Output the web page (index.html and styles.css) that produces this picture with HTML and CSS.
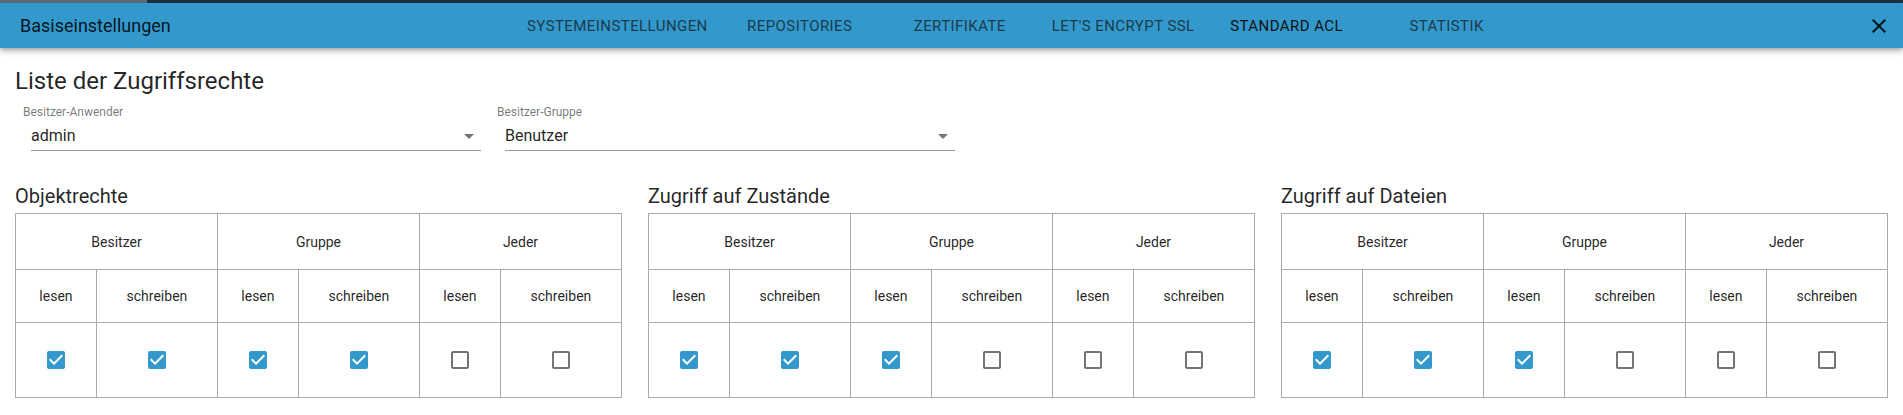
FILE: index.html
```html
<!DOCTYPE html>
<html lang="de">
<head>
<meta charset="utf-8">
<title>Basiseinstellungen</title>
<link rel="stylesheet" href="styles.css">
</head>
<body>
<div class="topstrip"><span class="strip-a"></span><span class="strip-b"></span></div>
<header class="appbar">
  <div class="appbar-title">Basiseinstellungen</div>
  <nav class="tabs">
    <div class="tab">Systemeinstellungen</div>
    <div class="tab">Repositories</div>
    <div class="tab">Zertifikate</div>
    <div class="tab">Let's Encrypt SSL</div>
    <div class="tab active">Standard ACL</div>
    <div class="tab">Statistik</div>
  </nav>
  <button class="close" aria-label="Schließen">
    <svg viewBox="0 0 24 24" width="24" height="24"><path d="M19 6.41L17.59 5 12 10.59 6.41 5 5 6.41 10.59 12 5 17.59 6.41 19 12 13.41 17.59 19 19 17.59 13.41 12z"/></svg>
  </button>
</header>

<main class="content">
  <h1 class="page-title">Liste der Zugriffsrechte</h1>

  <div class="selects">
    <div class="field">
      <div class="field-label">Besitzer-Anwender</div>
      <div class="select-box">
        <span class="select-value">admin</span>
        <svg class="arrow" viewBox="0 0 24 24" width="24" height="24"><path d="M7 10l5 5 5-5z"/></svg>
      </div>
    </div>
    <div class="field">
      <div class="field-label">Besitzer-Gruppe</div>
      <div class="select-box">
        <span class="select-value">Benutzer</span>
        <svg class="arrow" viewBox="0 0 24 24" width="24" height="24"><path d="M7 10l5 5 5-5z"/></svg>
      </div>
    </div>
  </div>

  <div class="sections">
    <section class="section">
      <h2 class="section-title">Objektrechte</h2>
      <table class="acl">
        <colgroup><col class="c-r"><col class="c-w"><col class="c-r"><col class="c-w"><col class="c-r"><col class="c-w"></colgroup>
        <tr class="row-group"><th colspan="2">Besitzer</th><th colspan="2">Gruppe</th><th colspan="2">Jeder</th></tr>
        <tr class="row-perm"><td>lesen</td><td>schreiben</td><td>lesen</td><td>schreiben</td><td>lesen</td><td>schreiben</td></tr>
        <tr class="row-check">
          <td><svg class="cb on" viewBox="3 3 18 18"><path d="M19 3H5c-1.11 0-2 .9-2 2v14c0 1.1.89 2 2 2h14c1.11 0 2-.9 2-2V5c0-1.1-.89-2-2-2zm-9 14l-5-5 1.41-1.41L10 14.17l7.59-7.59L19 8l-9 9z"/></svg></td>
          <td><svg class="cb on" viewBox="3 3 18 18"><path d="M19 3H5c-1.11 0-2 .9-2 2v14c0 1.1.89 2 2 2h14c1.11 0 2-.9 2-2V5c0-1.1-.89-2-2-2zm-9 14l-5-5 1.41-1.41L10 14.17l7.59-7.59L19 8l-9 9z"/></svg></td>
          <td><svg class="cb on" viewBox="3 3 18 18"><path d="M19 3H5c-1.11 0-2 .9-2 2v14c0 1.1.89 2 2 2h14c1.11 0 2-.9 2-2V5c0-1.1-.89-2-2-2zm-9 14l-5-5 1.41-1.41L10 14.17l7.59-7.59L19 8l-9 9z"/></svg></td>
          <td><svg class="cb on" viewBox="3 3 18 18"><path d="M19 3H5c-1.11 0-2 .9-2 2v14c0 1.1.89 2 2 2h14c1.11 0 2-.9 2-2V5c0-1.1-.89-2-2-2zm-9 14l-5-5 1.41-1.41L10 14.17l7.59-7.59L19 8l-9 9z"/></svg></td>
          <td><svg class="cb off" viewBox="3 3 18 18"><path d="M19 5v14H5V5h14m0-2H5c-1.1 0-2 .9-2 2v14c0 1.1.9 2 2 2h14c1.1 0 2-.9 2-2V5c0-1.1-.9-2-2-2z"/></svg></td>
          <td><svg class="cb off" viewBox="3 3 18 18"><path d="M19 5v14H5V5h14m0-2H5c-1.1 0-2 .9-2 2v14c0 1.1.9 2 2 2h14c1.1 0 2-.9 2-2V5c0-1.1-.9-2-2-2z"/></svg></td>
        </tr>
      </table>
    </section>

    <section class="section">
      <h2 class="section-title">Zugriff auf Zustände</h2>
      <table class="acl">
        <colgroup><col class="c-r"><col class="c-w"><col class="c-r"><col class="c-w"><col class="c-r"><col class="c-w"></colgroup>
        <tr class="row-group"><th colspan="2">Besitzer</th><th colspan="2">Gruppe</th><th colspan="2">Jeder</th></tr>
        <tr class="row-perm"><td>lesen</td><td>schreiben</td><td>lesen</td><td>schreiben</td><td>lesen</td><td>schreiben</td></tr>
        <tr class="row-check">
          <td><svg class="cb on" viewBox="3 3 18 18"><path d="M19 3H5c-1.11 0-2 .9-2 2v14c0 1.1.89 2 2 2h14c1.11 0 2-.9 2-2V5c0-1.1-.89-2-2-2zm-9 14l-5-5 1.41-1.41L10 14.170l7.59-7.59L19 8l-9 9z"/></svg></td>
          <td><svg class="cb on" viewBox="3 3 18 18"><path d="M19 3H5c-1.11 0-2 .9-2 2v14c0 1.1.89 2 2 2h14c1.11 0 2-.9 2-2V5c0-1.1-.89-2-2-2zm-9 14l-5-5 1.41-1.41L10 14.17l7.59-7.59L19 8l-9 9z"/></svg></td>
          <td><svg class="cb on" viewBox="3 3 18 18"><path d="M19 3H5c-1.11 0-2 .9-2 2v14c0 1.1.89 2 2 2h14c1.11 0 2-.9 2-2V5c0-1.1-.89-2-2-2zm-9 14l-5-5 1.41-1.41L10 14.17l7.59-7.59L19 8l-9 9z"/></svg></td>
          <td><svg class="cb off" viewBox="3 3 18 18"><path d="M19 5v14H5V5h14m0-2H5c-1.1 0-2 .9-2 2v14c0 1.1.9 2 2 2h14c1.1 0 2-.9 2-2V5c0-1.1-.9-2-2-2z"/></svg></td>
          <td><svg class="cb off" viewBox="3 3 18 18"><path d="M19 5v14H5V5h14m0-2H5c-1.1 0-2 .9-2 2v14c0 1.1.9 2 2 2h14c1.1 0 2-.9 2-2V5c0-1.1-.9-2-2-2z"/></svg></td>
          <td><svg class="cb off" viewBox="3 3 18 18"><path d="M19 5v14H5V5h14m0-2H5c-1.1 0-2 .9-2 2v14c0 1.1.9 2 2 2h14c1.1 0 2-.9 2-2V5c0-1.1-.9-2-2-2z"/></svg></td>
        </tr>
      </table>
    </section>

    <section class="section">
      <h2 class="section-title">Zugriff auf Dateien</h2>
      <table class="acl">
        <colgroup><col class="c-r"><col class="c-w"><col class="c-r"><col class="c-w"><col class="c-r"><col class="c-w"></colgroup>
        <tr class="row-group"><th colspan="2">Besitzer</th><th colspan="2">Gruppe</th><th colspan="2">Jeder</th></tr>
        <tr class="row-perm"><td>lesen</td><td>schreiben</td><td>lesen</td><td>schreiben</td><td>lesen</td><td>schreiben</td></tr>
        <tr class="row-check">
          <td><svg class="cb on" viewBox="3 3 18 18"><path d="M19 3H5c-1.11 0-2 .9-2 2v14c0 1.1.89 2 2 2h14c1.11 0 2-.9 2-2V5c0-1.1-.89-2-2-2zm-9 14l-5-5 1.41-1.41L10 14.17l7.59-7.59L19 8l-9 9z"/></svg></td>
          <td><svg class="cb on" viewBox="3 3 18 18"><path d="M19 3H5c-1.11 0-2 .9-2 2v14c0 1.1.89 2 2 2h14c1.11 0 2-.9 2-2V5c0-1.1-.89-2-2-2zm-9 14l-5-5 1.41-1.41L10 14.17l7.59-7.59L19 8l-9 9z"/></svg></td>
          <td><svg class="cb on" viewBox="3 3 18 18"><path d="M19 3H5c-1.11 0-2 .9-2 2v14c0 1.1.89 2 2 2h14c1.11 0 2-.9 2-2V5c0-1.1-.89-2-2-2zm-9 14l-5-5 1.41-1.41L10 14.17l7.59-7.59L19 8l-9 9z"/></svg></td>
          <td><svg class="cb off" viewBox="3 3 18 18"><path d="M19 5v14H5V5h14m0-2H5c-1.1 0-2 .9-2 2v14c0 1.1.9 2 2 2h14c1.1 0 2-.9 2-2V5c0-1.1-.9-2-2-2z"/></svg></td>
          <td><svg class="cb off" viewBox="3 3 18 18"><path d="M19 5v14H5V5h14m0-2H5c-1.1 0-2 .9-2 2v14c0 1.1.9 2 2 2h14c1.1 0 2-.9 2-2V5c0-1.1-.9-2-2-2z"/></svg></td>
          <td><svg class="cb off" viewBox="3 3 18 18"><path d="M19 5v14H5V5h14m0-2H5c-1.1 0-2 .9-2 2v14c0 1.1.9 2 2 2h14c1.1 0 2-.9 2-2V5c0-1.1-.9-2-2-2z"/></svg></td>
        </tr>
      </table>
    </section>
  </div>
</main>
</body>
</html>
```

FILE: styles.css
```css
* { box-sizing: border-box; }

html, body {
  margin: 0;
  padding: 0;
  background: #ffffff;
  font-family: Roboto, "Liberation Sans", Arial, sans-serif;
  color: rgba(0, 0, 0, 0.87);
}

.topstrip {
  display: flex;
  height: 3px;
  background: #1c3344;
}
.strip-a { width: 147px; background: #5f6f7b; }
.strip-b { flex: 1; background: #1c3344; }

.appbar {
  position: relative;
  z-index: 2;
  display: flex;
  align-items: center;
  height: 45px;
  background: #3399cc;
  box-shadow: 0 2px 4px -1px rgba(0,0,0,0.2), 0 4px 5px 0 rgba(0,0,0,0.14), 0 1px 10px 0 rgba(0,0,0,0.12);
}

.appbar-title {
  flex: none;
  width: 515px;
  padding-left: 20px;
  font-size: 18px;
  font-weight: 400;
  color: rgba(0, 0, 0, 0.87);
}

.tabs {
  display: flex;
  height: 100%;
}

.tab {
  min-width: 160px;
  padding: 0 12px;
  display: flex;
  align-items: center;
  justify-content: center;
  font-size: 15px;
  font-weight: 400;
  letter-spacing: 0.02857em;
  text-transform: uppercase;
  color: #111;
  opacity: 0.7;
  white-space: nowrap;
}
.tab.active { opacity: 1; }

.close {
  margin-left: auto;
  margin-right: 12px;
  padding: 0;
  border: 0;
  background: transparent;
  width: 24px;
  height: 24px;
  display: flex;
}
.close svg { fill: rgba(0, 0, 0, 0.87); }

.content {
  padding: 0 15px;
}

.page-title {
  margin: 0;
  padding-top: 19px;
  font-size: 24px;
  line-height: 28px;
  font-weight: 400;
  color: rgba(0, 0, 0, 0.87);
}

.selects {
  display: flex;
  gap: 16px;
  padding-left: 8px;
  margin-top: 10px;
}

.field { width: 458px; }

.field-label {
  font-size: 12px;
  line-height: 14px;
  color: rgba(0, 0, 0, 0.54);
}

.select-box {
  margin-top: 2px;
  margin-left: 8px;
  width: 450px;
  height: 30px;
  display: flex;
  align-items: center;
  border-bottom: 1px solid rgba(0, 0, 0, 0.42);
}

.select-value {
  font-size: 16px;
  color: rgba(0, 0, 0, 0.87);
}

.arrow {
  margin-left: auto;
  fill: rgba(0, 0, 0, 0.54);
}

.sections {
  display: grid;
  grid-template-columns: repeat(3, 1fr);
  column-gap: 26px;
  margin-top: 33px;
}

.section-title {
  margin: 0 0 5px 0;
  font-size: 20px;
  line-height: 24px;
  font-weight: 400;
  color: rgba(0, 0, 0, 0.87);
}

.acl {
  width: 100%;
  border-collapse: collapse;
  table-layout: fixed;
  border: 1px solid #aaaaaa;
}

.c-r { width: 13.35%; }
.c-w { width: 19.98%; }

.acl th, .acl td {
  border: 1px solid #aaaaaa;
  padding: 0;
  text-align: center;
  vertical-align: middle;
  font-size: 14px;
  font-weight: 400;
  color: rgba(0, 0, 0, 0.87);
}

.row-group { height: 56px; }
.row-perm { height: 53px; }
.row-check { height: 75px; }

.cb {
  display: block;
  width: 18px;
  height: 18px;
  margin: 0 auto;
}
.cb.on { fill: #3399cc; }
.cb.off { fill: rgba(0, 0, 0, 0.54); }
```
